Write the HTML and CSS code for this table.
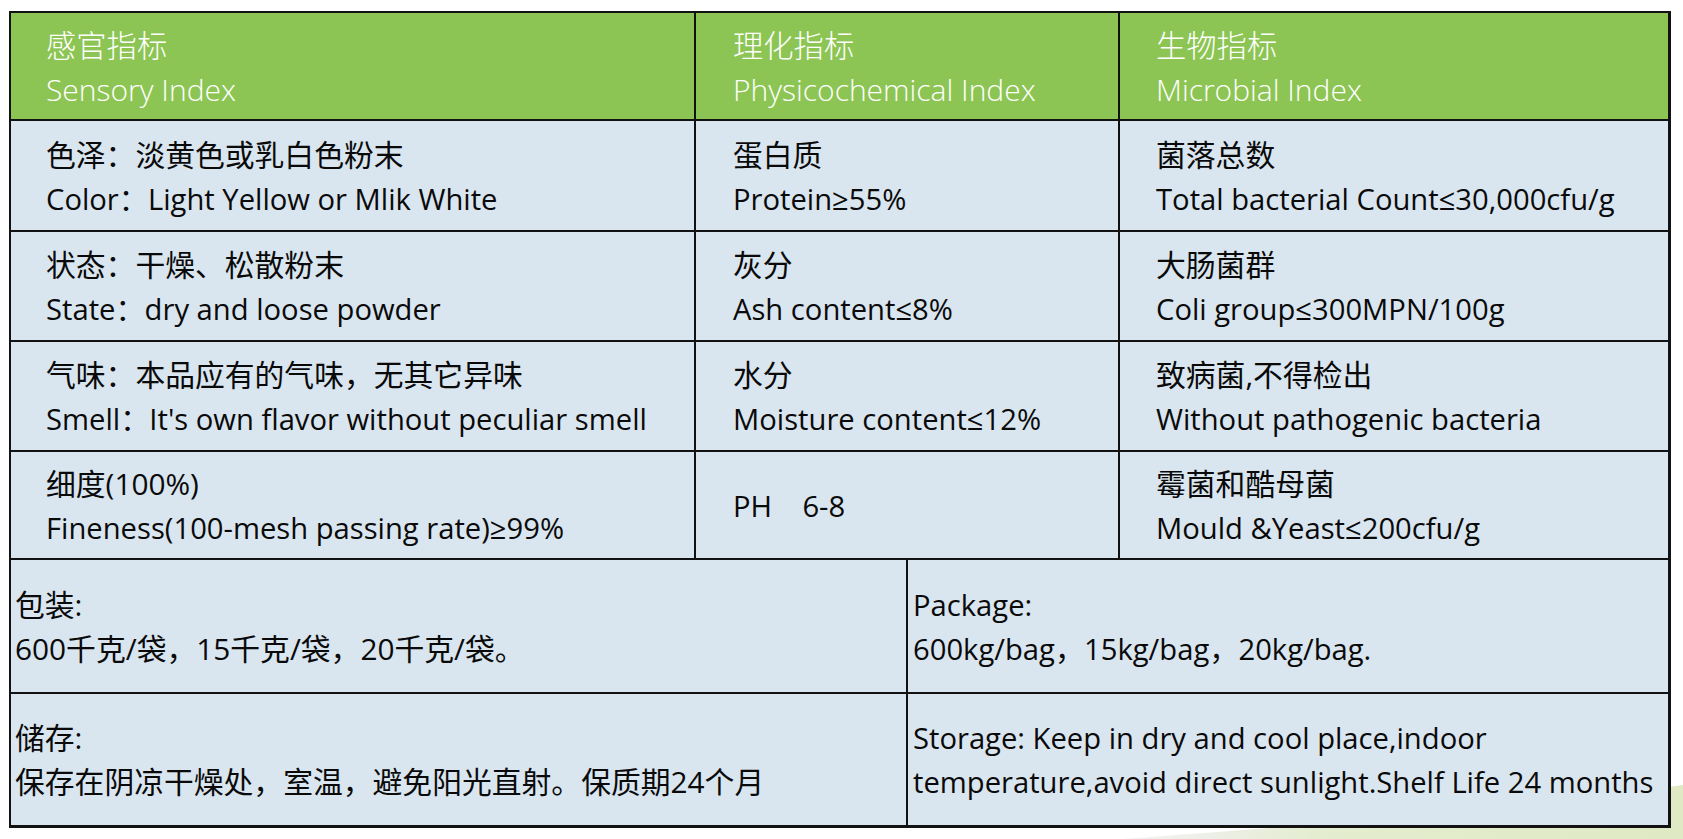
FILE: index.html
```html
<!DOCTYPE html>
<html lang="zh-CN">
<head>
<meta charset="utf-8">
<title>Product Specification</title>
<link rel="stylesheet" href="styles.css">
</head>
<body>
<div class="page">
  <svg class="swoosh" width="560" height="60" viewBox="0 0 560 60" aria-hidden="true">
    <defs>
      <linearGradient id="sw" x1="0" y1="0" x2="1" y2="0">
        <stop offset="0" stop-color="#e6e6e6" stop-opacity="0.5"/>
        <stop offset="0.35" stop-color="#e4edcf"/>
        <stop offset="1" stop-color="#dfe9c3"/>
      </linearGradient>
    </defs>
    <path d="M0 60 C 160 48, 360 34, 560 6 L 560 60 Z" fill="url(#sw)"/>
  </svg>
  <div class="spec">
    <div class="grid-top">
      <div class="cell head"><span class="zh">感官指标</span><span class="en">Sensory Index</span></div>
      <div class="cell head c2"><span class="zh">理化指标</span><span class="en">Physicochemical Index</span></div>
      <div class="cell head c3"><span class="zh">生物指标</span><span class="en">Microbial Index</span></div>

      <div class="cell"><span class="zh">色泽：淡黄色或乳白色粉末</span><span class="en">Color：Light Yellow or Mlik White</span></div>
      <div class="cell c2"><span class="zh">蛋白质</span><span class="en">Protein≥55%</span></div>
      <div class="cell c3"><span class="zh">菌落总数</span><span class="en">Total bacterial Count≤30,000cfu/g</span></div>

      <div class="cell"><span class="zh">状态：干燥、松散粉末</span><span class="en">State：dry and loose powder</span></div>
      <div class="cell c2"><span class="zh">灰分</span><span class="en">Ash content≤8%</span></div>
      <div class="cell c3"><span class="zh">大肠菌群</span><span class="en">Coli group≤300MPN/100g</span></div>

      <div class="cell"><span class="zh">气味：本品应有的气味，无其它异味</span><span class="en">Smell：It's own flavor without peculiar smell</span></div>
      <div class="cell c2"><span class="zh">水分</span><span class="en">Moisture content≤12%</span></div>
      <div class="cell c3"><span class="zh">致病菌,不得检出</span><span class="en">Without pathogenic bacteria</span></div>

      <div class="cell"><span class="zh">细度(100%)</span><span class="en">Fineness(100-mesh passing rate)≥99%</span></div>
      <div class="cell c2"><span class="en">PH&nbsp;&nbsp;&nbsp;&nbsp;6-8</span></div>
      <div class="cell c3"><span class="zh">霉菌和酷母菌</span><span class="en">Mould &amp;Yeast≤200cfu/g</span></div>
    </div>
    <div class="grid-bottom">
      <div class="cell wide"><span class="zh">包装:</span><span class="zh">600千克/袋，15千克/袋，20千克/袋。</span></div>
      <div class="cell wide right"><span class="en">Package:</span><span class="en">600kg/bag，15kg/bag，20kg/bag.</span></div>
      <div class="cell wide low"><span class="zh">储存:</span><span class="zh">保存在阴凉干燥处，室温，避免阳光直射。保质期24个月</span></div>
      <div class="cell wide low right"><span class="en">Storage: Keep in dry and cool place,indoor</span><span class="en">temperature,avoid direct sunlight.Shelf Life 24 months</span></div>
    </div>
  </div>
</div>
</body>
</html>
```

FILE: styles.css
```css
html, body {
  margin: 0;
  padding: 0;
  background: #ffffff;
}

.page {
  position: relative;
  width: 1683px;
  height: 839px;
  overflow: hidden;
  padding: 11px 0 0 9px;
  box-sizing: border-box;
  font-family: "Open Sans", "Noto Sans CJK SC", sans-serif;
  font-size: 29.5px;
  line-height: 44px;
  color: #0a0a0a;
}

.swoosh {
  position: absolute;
  right: 0;
  bottom: 0;
  z-index: 0;
}

.spec {
  position: relative;
  z-index: 1;
  width: 1662px;
  box-sizing: border-box;
  border-style: solid;
  border-color: #121212;
  border-width: 2px 3px 3px 2px;
  background: #121212;
  display: flex;
  flex-direction: column;
  gap: 2px;
}

.grid-top {
  display: grid;
  grid-template-columns: 683px 422px 548px;
  grid-template-rows: 106px 109px 108px 108px 106px;
  gap: 2px;
}

.grid-bottom {
  display: grid;
  grid-template-columns: 895px 760px;
  grid-template-rows: 132px 131px;
  gap: 2px;
}

.cell {
  background: #d9e5ef;
  display: flex;
  flex-direction: column;
  justify-content: center;
  padding-left: 35px;
  padding-top: 2px;
  white-space: nowrap;
}

.zh {
  font-size: 29.8px;
}

.en {
  font-size: 29.2px;
}

.cell.c2 {
  padding-left: 37px;
}

.cell.c3 {
  padding-left: 36px;
}

.cell.head {
  background: #8cc553;
  color: #ffffff;
  font-weight: 300;
  padding-top: 4px;
}

.cell.head .zh {
  font-size: 30.3px;
}

.cell.head .en {
  font-size: 30px;
}

.cell.wide {
  padding-left: 4px;
  padding-top: 2px;
}

.cell.wide.low {
  padding-top: 0;
}

.cell.wide.right {
  padding-left: 5px;
}
```
